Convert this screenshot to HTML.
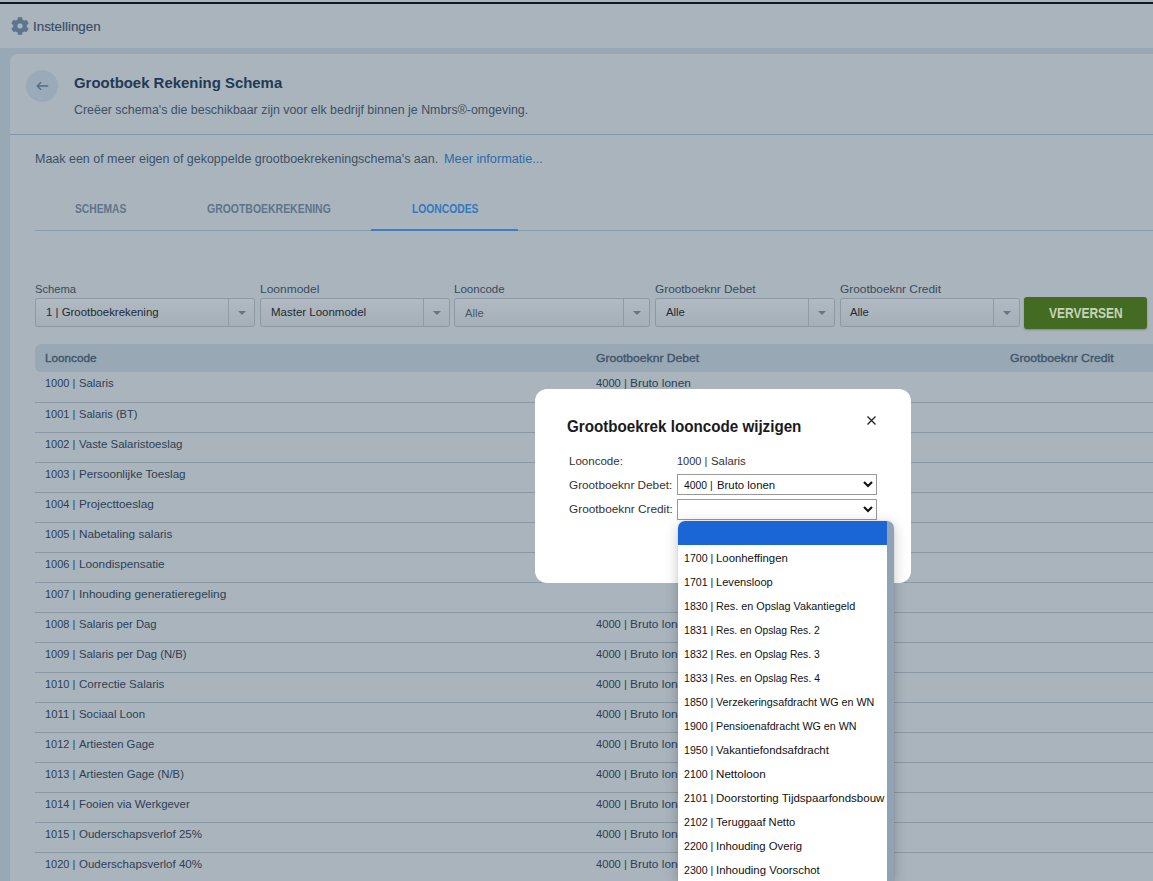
<!DOCTYPE html>
<html lang="nl"><head><meta charset="utf-8"><title>Grootboek Rekening Schema</title>
<style>
html,body{margin:0;padding:0}
html{width:1153px;height:881px;overflow:hidden}
body{width:1153px;height:881px;overflow:hidden;position:relative;background:#98a8b5;font-family:'Liberation Sans', sans-serif}
.t{position:absolute;white-space:nowrap;transform-origin:0 50%;line-height:1.2;display:block}
.abs{position:absolute}
#topa{left:0;top:0;width:1153px;height:2px;background:#a9b3bc}
#topb{left:0;top:2px;width:1153px;height:2px;background:#0e1620}
#hdr{left:0;top:4px;width:1153px;height:44px;background:#aab4bd}
#card{left:10px;top:54px;width:1143px;height:827px;background:#aab4bd;border-radius:8px 0 0 0}
#hr1{left:10px;top:133.5px;width:1143px;height:1px;background:#8196aa}
#back{left:26px;top:70px;width:32px;height:32px;border-radius:50%;background:#9aaab8}
#tabline{left:35px;top:229.5px;width:1118px;height:1px;background:#8b9eb1}
#tabact{left:371px;top:228.5px;width:147px;height:2px;background:#3f7fc0}
.sel{position:absolute;top:298.3px;height:28.4px;box-sizing:border-box;border:1px solid #8c99a5;border-radius:2.5px;background:linear-gradient(#b1bac2,#a5afb8)}
.sel i{position:absolute;top:0;bottom:0;width:1px;background:#8f9ca8}
.sel b{position:absolute;top:11.7px;width:0;height:0;border-left:4px solid transparent;border-right:4px solid transparent;border-top:4px solid #677582}
#btn{left:1024px;top:297px;width:123px;height:31.5px;border-radius:3px;background:#436c22;box-shadow:0 1px 2px rgba(40,50,60,.35)}
#thead{left:35px;top:344px;width:1118px;height:28px;background:#98a8b5;border-radius:6px 0 0 6px}
.ln{position:absolute;left:35px;width:1118px;height:1px;background:#8a98a4}
#modal{left:535px;top:389px;width:376px;height:193.5px;background:#fff;border-radius:12px;z-index:10}
.msel{position:absolute;left:677px;width:200px;height:21px;box-sizing:border-box;border:1px solid #999;border-radius:0;background:#fff;z-index:15}
#dd{left:678px;top:521px;width:215.5px;height:360px;background:#fff;z-index:30;border-radius:7px 7px 0 0;box-shadow:0 3px 14px rgba(0,0,0,.22), 0 0 2px rgba(0,0,0,.12);overflow:hidden}
#ddsel{left:0;top:0;width:209px;height:24px;background:#1b66d6}
#ddsb{left:209px;top:0;width:6.5px;height:360px;background:#8fa3b4}
svg{position:absolute;overflow:visible}
</style></head><body>
<div class="abs" id="topa"></div><div class="abs" id="topb"></div><div class="abs" id="hdr"></div>
<div class="abs" id="card"></div>
<div class="abs" id="hr1"></div>
<div class="abs" id="back"></div>
<svg style="left:36px;top:81px" width="13" height="10" viewBox="0 0 13 10"><path d="M12.2 5H1.5M5 1.2L1.2 5L5 8.8" fill="none" stroke="#566d83" stroke-width="1.4"/></svg>
<svg style="left:11px;top:16.9px" width="18" height="18" viewBox="0 0 512 512"><path fill="#5c748c" stroke="#5c748c" stroke-width="7" d="M487.4 315.7l-42.600-24.600c4.300-23.200 4.300-47 0-70.200l42.600-24.600c4.900-2.800 7.100-8.600 5.500-14-11.100-35.600-30-67.800-54.700-94.600-3.800-4.100-10-5.100-14.800-2.300L380.800 110c-17.900-15.400-38.500-27.300-60.800-35.100V25.800c0-5.600-3.900-10.500-9.400-11.700-36.700-8.200-74.300-7.800-109.200 0-5.500 1.200-9.400 6.100-9.400 11.700V75c-22.200 7.900-42.800 19.800-60.800 35.100L88.700 85.500c-4.900-2.800-11-1.900-14.800 2.300-24.700 26.700-43.600 58.900-54.700 94.600-1.700 5.400.6 11.200 5.500 14L67.300 221c-4.300 23.200-4.300 47 0 70.200l-42.600 24.600c-4.900 2.800-7.100 8.600-5.500 14 11.100 35.600 30 67.800 54.700 94.600 3.800 4.100 10 5.100 14.800 2.300l42.600-24.600c17.900 15.400 38.500 27.300 60.800 35.100v49.200c0 5.600 3.900 10.500 9.400 11.700 36.700 8.200 74.300 7.800 109.200 0 5.500-1.200 9.400-6.100 9.400-11.700v-49.200c22.200-7.900 42.800-19.800 60.800-35.100l42.600 24.600c4.900 2.800 11 1.900 14.800-2.300 24.700-26.700 43.600-58.900 54.700-94.600 1.500-5.500-.7-11.300-5.600-14.100zM256 336c-44.100 0-80-35.900-80-80s35.900-80 80-80 80 35.900 80 80-35.900 80-80 80z"/></svg>
<div class="abs" id="tabline"></div><div class="abs" id="tabact"></div>
<div class="sel" style="left:35px;width:220px"><i style="left:191.9px"></i><b style="left:201.5px"></b></div><div class="sel" style="left:260px;width:189.5px"><i style="left:162px"></i><b style="left:171.6px"></b></div><div class="sel" style="left:454px;width:195.5px"><i style="left:168px"></i><b style="left:177.6px"></b></div><div class="sel" style="left:655px;width:179.5px"><i style="left:152px"></i><b style="left:161.6px"></b></div><div class="sel" style="left:839.5px;width:180px"><i style="left:152.79999999999995px"></i><b style="left:162.39999999999995px"></b></div>
<div class="abs" id="btn"></div>
<div class="abs" id="thead"></div>
<div class="ln" style="top:402px"></div><div class="ln" style="top:432px"></div><div class="ln" style="top:462px"></div><div class="ln" style="top:492px"></div><div class="ln" style="top:522px"></div><div class="ln" style="top:552px"></div><div class="ln" style="top:582px"></div><div class="ln" style="top:612px"></div><div class="ln" style="top:642px"></div><div class="ln" style="top:672px"></div><div class="ln" style="top:702px"></div><div class="ln" style="top:732px"></div><div class="ln" style="top:762px"></div><div class="ln" style="top:792px"></div><div class="ln" style="top:822px"></div><div class="ln" style="top:852px"></div>
<div class="abs" id="modal"></div>
<svg style="left:866.7px;top:416.2px;z-index:20" width="9" height="9" viewBox="0 0 9 9"><path d="M0.5 0.5L8.5 8.5M8.5 0.5L0.5 8.5" stroke="#222" stroke-width="1.3" fill="none"/></svg>
<div class="msel" style="top:474px"></div><div class="msel" style="top:499px"></div>
<svg style="left:863px;top:480.8px;z-index:20" width="10" height="6" viewBox="0 0 10 6"><path d="M1 1L5 5L9 1" stroke="#111" stroke-width="2.1" fill="none"/></svg>
<svg style="left:863px;top:505.8px;z-index:20" width="10" height="6" viewBox="0 0 10 6"><path d="M1 1L5 5L9 1" stroke="#111" stroke-width="2.1" fill="none"/></svg>
<div class="abs" id="dd"><div class="abs" id="ddsel"></div><div class="abs" id="ddsb"></div></div>
<span class="t" id="t0" style="left:33.1px;top:27.2px;font-size:13.5px;font-weight:400;color:#364c62;font-family:'Liberation Sans', sans-serif;-webkit-text-stroke:0.15px #364c62;transform:translateY(-50%) scaleX(0.9910);">Instellingen</span>
<span class="t" id="t1" style="left:74.4px;top:83.3px;font-size:15.3px;font-weight:700;color:#1f3a55;font-family:'Liberation Sans', sans-serif;transform:translateY(-50%) scaleX(0.9758);">Grootboek Rekening Schema</span>
<span class="t" id="t2" style="left:74.4px;top:110.3px;font-size:12.5px;font-weight:400;color:#3b5165;font-family:'Liberation Sans', sans-serif;transform:translateY(-50%) scaleX(0.9925);">Creëer schema's die beschikbaar zijn voor elk bedrijf binnen je Nmbrs®-omgeving.</span>
<span class="t" id="t3" style="left:34.5px;top:158.8px;font-size:12.5px;font-weight:400;color:#3b5165;font-family:'Liberation Sans', sans-serif;transform:translateY(-50%) scaleX(0.9977);">Maak een of meer eigen of gekoppelde grootboekrekeningschema's aan.</span>
<span class="t" id="t4" style="left:444px;top:158.8px;font-size:12.5px;font-weight:400;color:#2c6ba3;font-family:'Liberation Sans', sans-serif;transform:translateY(-50%) scaleX(1.0158);">Meer informatie...</span>
<span class="t" id="t5" style="left:75.4px;top:209.8px;font-size:12.6px;font-weight:700;color:#5e758a;font-family:'Liberation Sans', sans-serif;transform:translateY(-50%) scaleX(0.8161);">SCHEMAS</span>
<span class="t" id="t6" style="left:207.2px;top:209.8px;font-size:12.6px;font-weight:700;color:#5e758a;font-family:'Liberation Sans', sans-serif;transform:translateY(-50%) scaleX(0.8306);">GROOTBOEKREKENING</span>
<span class="t" id="t7" style="left:411.5px;top:209.8px;font-size:12.6px;font-weight:700;color:#3478bd;font-family:'Liberation Sans', sans-serif;transform:translateY(-50%) scaleX(0.8180);">LOONCODES</span>
<span class="t" id="t8" style="left:35.3px;top:289.0px;font-size:11.8px;font-weight:400;color:#364b5f;font-family:'Liberation Sans', sans-serif;transform:translateY(-50%) scaleX(0.9496);">Schema</span>
<span class="t" id="t9" style="left:259.7px;top:289.0px;font-size:11.8px;font-weight:400;color:#364b5f;font-family:'Liberation Sans', sans-serif;transform:translateY(-50%) scaleX(1.0158);">Loonmodel</span>
<span class="t" id="t10" style="left:454.3px;top:289.0px;font-size:11.8px;font-weight:400;color:#364b5f;font-family:'Liberation Sans', sans-serif;transform:translateY(-50%) scaleX(0.9782);">Looncode</span>
<span class="t" id="t11" style="left:655px;top:289.0px;font-size:11.8px;font-weight:400;color:#364b5f;font-family:'Liberation Sans', sans-serif;transform:translateY(-50%) scaleX(1.0026);">Grootboeknr Debet</span>
<span class="t" id="t12" style="left:839.8px;top:289.0px;font-size:11.8px;font-weight:400;color:#364b5f;font-family:'Liberation Sans', sans-serif;transform:translateY(-50%) scaleX(1.0067);">Grootboeknr Credit</span>
<span class="t" id="t13" style="left:46.4px;top:312.7px;font-size:11.4px;font-weight:400;color:#1e2933;font-family:'Liberation Sans', sans-serif;transform:translateY(-50%) scaleX(1.0007);">1 | Grootboekrekening</span>
<span class="t" id="t14" style="left:270.6px;top:312.7px;font-size:11.4px;font-weight:400;color:#1e2933;font-family:'Liberation Sans', sans-serif;transform:translateY(-50%) scaleX(1.0080);">Master Loonmodel</span>
<span class="t" id="t15" style="left:464.8px;top:312.7px;font-size:11.8px;font-weight:400;color:#4a5864;font-family:'Liberation Sans', sans-serif;transform:translateY(-50%) scaleX(0.9455);">Alle</span>
<span class="t" id="t16" style="left:666px;top:312.7px;font-size:11.4px;font-weight:400;color:#1e2933;font-family:'Liberation Sans', sans-serif;transform:translateY(-50%) scaleX(0.9895);">Alle</span>
<span class="t" id="t17" style="left:850.4px;top:312.7px;font-size:11.4px;font-weight:400;color:#1e2933;font-family:'Liberation Sans', sans-serif;transform:translateY(-50%) scaleX(0.9895);">Alle</span>
<span class="t" id="t18" style="left:1048.5px;top:313.6px;font-size:14.2px;font-weight:700;color:#c6d3bc;font-family:'Liberation Sans', sans-serif;transform:translateY(-50%) scaleX(0.8445);">VERVERSEN</span>
<span class="t" id="t19" style="left:45.1px;top:359.3px;font-size:11.5px;font-weight:400;color:#42566c;font-family:'Liberation Sans', sans-serif;-webkit-text-stroke:0.38px #42566c;transform:translateY(-50%) scaleX(1.0192);">Looncode</span>
<span class="t" id="t20" style="left:596.2px;top:359.3px;font-size:11.5px;font-weight:400;color:#42566c;font-family:'Liberation Sans', sans-serif;-webkit-text-stroke:0.38px #42566c;transform:translateY(-50%) scaleX(1.0551);">Grootboeknr Debet</span>
<span class="t" id="t21" style="left:1010.2px;top:359.3px;font-size:11.5px;font-weight:400;color:#42566c;font-family:'Liberation Sans', sans-serif;-webkit-text-stroke:0.38px #42566c;transform:translateY(-50%) scaleX(1.0593);">Grootboeknr Credit</span>
<span class="t" id="t22" style="left:45.3px;top:382.59999999999997px;font-size:11.6px;font-weight:400;color:#2c4054;font-family:'Liberation Sans', sans-serif;transform:translateY(-50%) scaleX(0.9460);">1000 |</span>
<span class="t" id="t23" style="left:78.69999999999999px;top:382.59999999999997px;font-size:11.6px;font-weight:400;color:#2c4054;font-family:'Liberation Sans', sans-serif;transform:translateY(-50%) scaleX(0.9759);">Salaris</span>
<span class="t" id="t24" style="left:596.2px;top:382.59999999999997px;font-size:11.6px;font-weight:400;color:#2c4054;font-family:'Liberation Sans', sans-serif;transform:translateY(-50%) scaleX(0.9616);">4000 |</span>
<span class="t" id="t25" style="left:630.2px;top:382.59999999999997px;font-size:11.6px;font-weight:400;color:#2c4054;font-family:'Liberation Sans', sans-serif;transform:translateY(-50%) scaleX(1.0285);">Bruto lonen</span>
<span class="t" id="t26" style="left:45.3px;top:413.59999999999997px;font-size:11.6px;font-weight:400;color:#2c4054;font-family:'Liberation Sans', sans-serif;transform:translateY(-50%) scaleX(0.9460);">1001 |</span>
<span class="t" id="t27" style="left:78.69999999999999px;top:413.59999999999997px;font-size:11.6px;font-weight:400;color:#2c4054;font-family:'Liberation Sans', sans-serif;transform:translateY(-50%) scaleX(0.9542);">Salaris (BT)</span>
<span class="t" id="t28" style="left:45.3px;top:443.59999999999997px;font-size:11.6px;font-weight:400;color:#2c4054;font-family:'Liberation Sans', sans-serif;transform:translateY(-50%) scaleX(0.9460);">1002 |</span>
<span class="t" id="t29" style="left:78.69999999999999px;top:443.59999999999997px;font-size:11.6px;font-weight:400;color:#2c4054;font-family:'Liberation Sans', sans-serif;transform:translateY(-50%) scaleX(0.9862);">Vaste Salaristoeslag</span>
<span class="t" id="t30" style="left:45.3px;top:473.59999999999997px;font-size:11.6px;font-weight:400;color:#2c4054;font-family:'Liberation Sans', sans-serif;transform:translateY(-50%) scaleX(0.9460);">1003 |</span>
<span class="t" id="t31" style="left:78.69999999999999px;top:473.59999999999997px;font-size:11.6px;font-weight:400;color:#2c4054;font-family:'Liberation Sans', sans-serif;transform:translateY(-50%) scaleX(1.0043);">Persoonlijke Toeslag</span>
<span class="t" id="t32" style="left:45.3px;top:503.59999999999997px;font-size:11.6px;font-weight:400;color:#2c4054;font-family:'Liberation Sans', sans-serif;transform:translateY(-50%) scaleX(0.9460);">1004 |</span>
<span class="t" id="t33" style="left:78.69999999999999px;top:503.59999999999997px;font-size:11.6px;font-weight:400;color:#2c4054;font-family:'Liberation Sans', sans-serif;transform:translateY(-50%) scaleX(1.0181);">Projecttoeslag</span>
<span class="t" id="t34" style="left:45.3px;top:533.6px;font-size:11.6px;font-weight:400;color:#2c4054;font-family:'Liberation Sans', sans-serif;transform:translateY(-50%) scaleX(0.9460);">1005 |</span>
<span class="t" id="t35" style="left:78.69999999999999px;top:533.6px;font-size:11.6px;font-weight:400;color:#2c4054;font-family:'Liberation Sans', sans-serif;transform:translateY(-50%) scaleX(1.0124);">Nabetaling salaris</span>
<span class="t" id="t36" style="left:45.3px;top:563.6px;font-size:11.6px;font-weight:400;color:#2c4054;font-family:'Liberation Sans', sans-serif;transform:translateY(-50%) scaleX(0.9460);">1006 |</span>
<span class="t" id="t37" style="left:78.69999999999999px;top:563.6px;font-size:11.6px;font-weight:400;color:#2c4054;font-family:'Liberation Sans', sans-serif;transform:translateY(-50%) scaleX(1.0136);">Loondispensatie</span>
<span class="t" id="t38" style="left:45.3px;top:593.6px;font-size:11.6px;font-weight:400;color:#2c4054;font-family:'Liberation Sans', sans-serif;transform:translateY(-50%) scaleX(0.9460);">1007 |</span>
<span class="t" id="t39" style="left:78.69999999999999px;top:593.6px;font-size:11.6px;font-weight:400;color:#2c4054;font-family:'Liberation Sans', sans-serif;transform:translateY(-50%) scaleX(1.0246);">Inhouding generatieregeling</span>
<span class="t" id="t40" style="left:45.3px;top:623.6px;font-size:11.6px;font-weight:400;color:#2c4054;font-family:'Liberation Sans', sans-serif;transform:translateY(-50%) scaleX(0.9460);">1008 |</span>
<span class="t" id="t41" style="left:78.69999999999999px;top:623.6px;font-size:11.6px;font-weight:400;color:#2c4054;font-family:'Liberation Sans', sans-serif;transform:translateY(-50%) scaleX(0.9711);">Salaris per Dag</span>
<span class="t" id="t42" style="left:596.2px;top:623.6px;font-size:11.6px;font-weight:400;color:#2c4054;font-family:'Liberation Sans', sans-serif;transform:translateY(-50%) scaleX(0.9616);">4000 |</span>
<span class="t" id="t43" style="left:630.2px;top:623.6px;font-size:11.6px;font-weight:400;color:#2c4054;font-family:'Liberation Sans', sans-serif;transform:translateY(-50%) scaleX(1.0285);">Bruto lonen</span>
<span class="t" id="t44" style="left:45.3px;top:653.6px;font-size:11.6px;font-weight:400;color:#2c4054;font-family:'Liberation Sans', sans-serif;transform:translateY(-50%) scaleX(0.9460);">1009 |</span>
<span class="t" id="t45" style="left:78.69999999999999px;top:653.6px;font-size:11.6px;font-weight:400;color:#2c4054;font-family:'Liberation Sans', sans-serif;transform:translateY(-50%) scaleX(0.9765);">Salaris per Dag (N/B)</span>
<span class="t" id="t46" style="left:596.2px;top:653.6px;font-size:11.6px;font-weight:400;color:#2c4054;font-family:'Liberation Sans', sans-serif;transform:translateY(-50%) scaleX(0.9616);">4000 |</span>
<span class="t" id="t47" style="left:630.2px;top:653.6px;font-size:11.6px;font-weight:400;color:#2c4054;font-family:'Liberation Sans', sans-serif;transform:translateY(-50%) scaleX(1.0285);">Bruto lonen</span>
<span class="t" id="t48" style="left:45.3px;top:683.6px;font-size:11.6px;font-weight:400;color:#2c4054;font-family:'Liberation Sans', sans-serif;transform:translateY(-50%) scaleX(0.9460);">1010 |</span>
<span class="t" id="t49" style="left:78.69999999999999px;top:683.6px;font-size:11.6px;font-weight:400;color:#2c4054;font-family:'Liberation Sans', sans-serif;transform:translateY(-50%) scaleX(0.9965);">Correctie Salaris</span>
<span class="t" id="t50" style="left:596.2px;top:683.6px;font-size:11.6px;font-weight:400;color:#2c4054;font-family:'Liberation Sans', sans-serif;transform:translateY(-50%) scaleX(0.9616);">4000 |</span>
<span class="t" id="t51" style="left:630.2px;top:683.6px;font-size:11.6px;font-weight:400;color:#2c4054;font-family:'Liberation Sans', sans-serif;transform:translateY(-50%) scaleX(1.0285);">Bruto lonen</span>
<span class="t" id="t52" style="left:45.3px;top:713.6px;font-size:11.6px;font-weight:400;color:#2c4054;font-family:'Liberation Sans', sans-serif;transform:translateY(-50%) scaleX(0.9720);">1011 |</span>
<span class="t" id="t53" style="left:78.69999999999999px;top:713.6px;font-size:11.6px;font-weight:400;color:#2c4054;font-family:'Liberation Sans', sans-serif;transform:translateY(-50%) scaleX(0.9844);">Sociaal Loon</span>
<span class="t" id="t54" style="left:596.2px;top:713.6px;font-size:11.6px;font-weight:400;color:#2c4054;font-family:'Liberation Sans', sans-serif;transform:translateY(-50%) scaleX(0.9616);">4000 |</span>
<span class="t" id="t55" style="left:630.2px;top:713.6px;font-size:11.6px;font-weight:400;color:#2c4054;font-family:'Liberation Sans', sans-serif;transform:translateY(-50%) scaleX(1.0285);">Bruto lonen</span>
<span class="t" id="t56" style="left:45.3px;top:743.6px;font-size:11.6px;font-weight:400;color:#2c4054;font-family:'Liberation Sans', sans-serif;transform:translateY(-50%) scaleX(0.9460);">1012 |</span>
<span class="t" id="t57" style="left:78.69999999999999px;top:743.6px;font-size:11.6px;font-weight:400;color:#2c4054;font-family:'Liberation Sans', sans-serif;transform:translateY(-50%) scaleX(0.9723);">Artiesten Gage</span>
<span class="t" id="t58" style="left:596.2px;top:743.6px;font-size:11.6px;font-weight:400;color:#2c4054;font-family:'Liberation Sans', sans-serif;transform:translateY(-50%) scaleX(0.9616);">4000 |</span>
<span class="t" id="t59" style="left:630.2px;top:743.6px;font-size:11.6px;font-weight:400;color:#2c4054;font-family:'Liberation Sans', sans-serif;transform:translateY(-50%) scaleX(1.0285);">Bruto lonen</span>
<span class="t" id="t60" style="left:45.3px;top:773.6px;font-size:11.6px;font-weight:400;color:#2c4054;font-family:'Liberation Sans', sans-serif;transform:translateY(-50%) scaleX(0.9460);">1013 |</span>
<span class="t" id="t61" style="left:78.69999999999999px;top:773.6px;font-size:11.6px;font-weight:400;color:#2c4054;font-family:'Liberation Sans', sans-serif;transform:translateY(-50%) scaleX(0.9748);">Artiesten Gage (N/B)</span>
<span class="t" id="t62" style="left:596.2px;top:773.6px;font-size:11.6px;font-weight:400;color:#2c4054;font-family:'Liberation Sans', sans-serif;transform:translateY(-50%) scaleX(0.9616);">4000 |</span>
<span class="t" id="t63" style="left:630.2px;top:773.6px;font-size:11.6px;font-weight:400;color:#2c4054;font-family:'Liberation Sans', sans-serif;transform:translateY(-50%) scaleX(1.0285);">Bruto lonen</span>
<span class="t" id="t64" style="left:45.3px;top:803.6px;font-size:11.6px;font-weight:400;color:#2c4054;font-family:'Liberation Sans', sans-serif;transform:translateY(-50%) scaleX(0.9460);">1014 |</span>
<span class="t" id="t65" style="left:78.69999999999999px;top:803.6px;font-size:11.6px;font-weight:400;color:#2c4054;font-family:'Liberation Sans', sans-serif;transform:translateY(-50%) scaleX(0.9835);">Fooien via Werkgever</span>
<span class="t" id="t66" style="left:596.2px;top:803.6px;font-size:11.6px;font-weight:400;color:#2c4054;font-family:'Liberation Sans', sans-serif;transform:translateY(-50%) scaleX(0.9616);">4000 |</span>
<span class="t" id="t67" style="left:630.2px;top:803.6px;font-size:11.6px;font-weight:400;color:#2c4054;font-family:'Liberation Sans', sans-serif;transform:translateY(-50%) scaleX(1.0285);">Bruto lonen</span>
<span class="t" id="t68" style="left:45.3px;top:833.6px;font-size:11.6px;font-weight:400;color:#2c4054;font-family:'Liberation Sans', sans-serif;transform:translateY(-50%) scaleX(0.9460);">1015 |</span>
<span class="t" id="t69" style="left:78.69999999999999px;top:833.6px;font-size:11.6px;font-weight:400;color:#2c4054;font-family:'Liberation Sans', sans-serif;transform:translateY(-50%) scaleX(0.9941);">Ouderschapsverlof 25%</span>
<span class="t" id="t70" style="left:596.2px;top:833.6px;font-size:11.6px;font-weight:400;color:#2c4054;font-family:'Liberation Sans', sans-serif;transform:translateY(-50%) scaleX(0.9616);">4000 |</span>
<span class="t" id="t71" style="left:630.2px;top:833.6px;font-size:11.6px;font-weight:400;color:#2c4054;font-family:'Liberation Sans', sans-serif;transform:translateY(-50%) scaleX(1.0285);">Bruto lonen</span>
<span class="t" id="t72" style="left:45.3px;top:863.6px;font-size:11.6px;font-weight:400;color:#2c4054;font-family:'Liberation Sans', sans-serif;transform:translateY(-50%) scaleX(0.9460);">1020 |</span>
<span class="t" id="t73" style="left:78.69999999999999px;top:863.6px;font-size:11.6px;font-weight:400;color:#2c4054;font-family:'Liberation Sans', sans-serif;transform:translateY(-50%) scaleX(0.9941);">Ouderschapsverlof 40%</span>
<span class="t" id="t74" style="left:596.2px;top:863.6px;font-size:11.6px;font-weight:400;color:#2c4054;font-family:'Liberation Sans', sans-serif;transform:translateY(-50%) scaleX(0.9616);">4000 |</span>
<span class="t" id="t75" style="left:630.2px;top:863.6px;font-size:11.6px;font-weight:400;color:#2c4054;font-family:'Liberation Sans', sans-serif;transform:translateY(-50%) scaleX(1.0285);">Bruto lonen</span>
<span class="t" id="t76" style="left:566.8px;top:426.8px;font-size:16.1px;font-weight:700;color:#1a1a1c;font-family:'Liberation Sans', sans-serif;z-index:20;transform:translateY(-50%) scaleX(0.9429);">Grootboekrek looncode wijzigen</span>
<span class="t" id="t77" style="left:569.2px;top:461.2px;font-size:11.6px;font-weight:400;color:#333;font-family:'Liberation Sans', sans-serif;z-index:20;transform:translateY(-50%) scaleX(0.9953);">Looncode:</span>
<span class="t" id="t78" style="left:677.4px;top:461.2px;font-size:11.7px;font-weight:400;color:#333;font-family:'Liberation Sans', sans-serif;z-index:20;transform:translateY(-50%) scaleX(0.9413);">1000 |</span>
<span class="t" id="t79" style="left:711.0px;top:461.2px;font-size:11.7px;font-weight:400;color:#333;font-family:'Liberation Sans', sans-serif;z-index:20;transform:translateY(-50%) scaleX(0.9739);">Salaris</span>
<span class="t" id="t80" style="left:569.2px;top:484.5px;font-size:11.6px;font-weight:400;color:#333;font-family:'Liberation Sans', sans-serif;z-index:20;transform:translateY(-50%) scaleX(1.0135);">Grootboeknr Debet:</span>
<span class="t" id="t81" style="left:569.2px;top:509.1px;font-size:11.6px;font-weight:400;color:#333;font-family:'Liberation Sans', sans-serif;z-index:20;transform:translateY(-50%) scaleX(1.0194);">Grootboeknr Credit:</span>
<span class="t" id="t82" style="left:684.3px;top:484.8px;font-size:11.7px;font-weight:400;color:#111;font-family:'Liberation Sans', sans-serif;z-index:20;transform:translateY(-50%) scaleX(0.8855);">4000 |</span>
<span class="t" id="t83" style="left:716.5999999999999px;top:484.8px;font-size:11.7px;font-weight:400;color:#111;font-family:'Liberation Sans', sans-serif;z-index:20;transform:translateY(-50%) scaleX(0.9719);">Bruto lonen</span>
<span class="t" id="t84" style="left:683.9px;top:557.8px;font-size:11.7px;font-weight:400;color:#111;font-family:'Liberation Sans', sans-serif;z-index:40;transform:translateY(-50%) scaleX(0.9041);">1700 |</span>
<span class="t" id="t85" style="left:715.9px;top:557.8px;font-size:11.7px;font-weight:400;color:#111;font-family:'Liberation Sans', sans-serif;z-index:40;transform:translateY(-50%) scaleX(0.9717);">Loonheffingen</span>
<span class="t" id="t86" style="left:683.9px;top:581.8px;font-size:11.7px;font-weight:400;color:#111;font-family:'Liberation Sans', sans-serif;z-index:40;transform:translateY(-50%) scaleX(0.9041);">1701 |</span>
<span class="t" id="t87" style="left:715.9px;top:581.8px;font-size:11.7px;font-weight:400;color:#111;font-family:'Liberation Sans', sans-serif;z-index:40;transform:translateY(-50%) scaleX(0.9499);">Levensloop</span>
<span class="t" id="t88" style="left:683.9px;top:605.8px;font-size:11.7px;font-weight:400;color:#111;font-family:'Liberation Sans', sans-serif;z-index:40;transform:translateY(-50%) scaleX(0.9041);">1830 |</span>
<span class="t" id="t89" style="left:715.9px;top:605.8px;font-size:11.7px;font-weight:400;color:#111;font-family:'Liberation Sans', sans-serif;z-index:40;transform:translateY(-50%) scaleX(0.9248);">Res. en Opslag Vakantiegeld</span>
<span class="t" id="t90" style="left:683.9px;top:629.8px;font-size:11.7px;font-weight:400;color:#111;font-family:'Liberation Sans', sans-serif;z-index:40;transform:translateY(-50%) scaleX(0.9041);">1831 |</span>
<span class="t" id="t91" style="left:715.9px;top:629.8px;font-size:11.7px;font-weight:400;color:#111;font-family:'Liberation Sans', sans-serif;z-index:40;transform:translateY(-50%) scaleX(0.8818);">Res. en Opslag Res. 2</span>
<span class="t" id="t92" style="left:683.9px;top:653.8px;font-size:11.7px;font-weight:400;color:#111;font-family:'Liberation Sans', sans-serif;z-index:40;transform:translateY(-50%) scaleX(0.9041);">1832 |</span>
<span class="t" id="t93" style="left:715.9px;top:653.8px;font-size:11.7px;font-weight:400;color:#111;font-family:'Liberation Sans', sans-serif;z-index:40;transform:translateY(-50%) scaleX(0.8818);">Res. en Opslag Res. 3</span>
<span class="t" id="t94" style="left:683.9px;top:677.8px;font-size:11.7px;font-weight:400;color:#111;font-family:'Liberation Sans', sans-serif;z-index:40;transform:translateY(-50%) scaleX(0.9041);">1833 |</span>
<span class="t" id="t95" style="left:715.9px;top:677.8px;font-size:11.7px;font-weight:400;color:#111;font-family:'Liberation Sans', sans-serif;z-index:40;transform:translateY(-50%) scaleX(0.8836);">Res. en Opslag Res. 4</span>
<span class="t" id="t96" style="left:683.9px;top:701.8px;font-size:11.7px;font-weight:400;color:#111;font-family:'Liberation Sans', sans-serif;z-index:40;transform:translateY(-50%) scaleX(0.9041);">1850 |</span>
<span class="t" id="t97" style="left:715.9px;top:701.8px;font-size:11.7px;font-weight:400;color:#111;font-family:'Liberation Sans', sans-serif;z-index:40;transform:translateY(-50%) scaleX(0.9202);">Verzekeringsafdracht WG en WN</span>
<span class="t" id="t98" style="left:683.9px;top:725.8px;font-size:11.7px;font-weight:400;color:#111;font-family:'Liberation Sans', sans-serif;z-index:40;transform:translateY(-50%) scaleX(0.9041);">1900 |</span>
<span class="t" id="t99" style="left:715.9px;top:725.8px;font-size:11.7px;font-weight:400;color:#111;font-family:'Liberation Sans', sans-serif;z-index:40;transform:translateY(-50%) scaleX(0.9171);">Pensioenafdracht WG en WN</span>
<span class="t" id="t100" style="left:683.9px;top:749.8px;font-size:11.7px;font-weight:400;color:#111;font-family:'Liberation Sans', sans-serif;z-index:40;transform:translateY(-50%) scaleX(0.9041);">1950 |</span>
<span class="t" id="t101" style="left:715.9px;top:749.8px;font-size:11.7px;font-weight:400;color:#111;font-family:'Liberation Sans', sans-serif;z-index:40;transform:translateY(-50%) scaleX(0.9780);">Vakantiefondsafdracht</span>
<span class="t" id="t102" style="left:683.9px;top:773.8px;font-size:11.7px;font-weight:400;color:#111;font-family:'Liberation Sans', sans-serif;z-index:40;transform:translateY(-50%) scaleX(0.9041);">2100 |</span>
<span class="t" id="t103" style="left:715.9px;top:773.8px;font-size:11.7px;font-weight:400;color:#111;font-family:'Liberation Sans', sans-serif;z-index:40;transform:translateY(-50%) scaleX(0.9931);">Nettoloon</span>
<span class="t" id="t104" style="left:683.9px;top:797.8px;font-size:11.7px;font-weight:400;color:#111;font-family:'Liberation Sans', sans-serif;z-index:40;transform:translateY(-50%) scaleX(0.9041);">2101 |</span>
<span class="t" id="t105" style="left:715.9px;top:797.8px;font-size:11.7px;font-weight:400;color:#111;font-family:'Liberation Sans', sans-serif;z-index:40;transform:translateY(-50%) scaleX(0.9855);">Doorstorting Tijdspaarfondsbouw</span>
<span class="t" id="t106" style="left:683.9px;top:821.8px;font-size:11.7px;font-weight:400;color:#111;font-family:'Liberation Sans', sans-serif;z-index:40;transform:translateY(-50%) scaleX(0.9041);">2102 |</span>
<span class="t" id="t107" style="left:715.9px;top:821.8px;font-size:11.7px;font-weight:400;color:#111;font-family:'Liberation Sans', sans-serif;z-index:40;transform:translateY(-50%) scaleX(0.9522);">Teruggaaf Netto</span>
<span class="t" id="t108" style="left:683.9px;top:845.8px;font-size:11.7px;font-weight:400;color:#111;font-family:'Liberation Sans', sans-serif;z-index:40;transform:translateY(-50%) scaleX(0.9041);">2200 |</span>
<span class="t" id="t109" style="left:715.9px;top:845.8px;font-size:11.7px;font-weight:400;color:#111;font-family:'Liberation Sans', sans-serif;z-index:40;transform:translateY(-50%) scaleX(0.9672);">Inhouding Overig</span>
<span class="t" id="t110" style="left:683.9px;top:869.8px;font-size:11.7px;font-weight:400;color:#111;font-family:'Liberation Sans', sans-serif;z-index:40;transform:translateY(-50%) scaleX(0.9041);">2300 |</span>
<span class="t" id="t111" style="left:715.9px;top:869.8px;font-size:11.7px;font-weight:400;color:#111;font-family:'Liberation Sans', sans-serif;z-index:40;transform:translateY(-50%) scaleX(0.9739);">Inhouding Voorschot</span>
</body></html>
